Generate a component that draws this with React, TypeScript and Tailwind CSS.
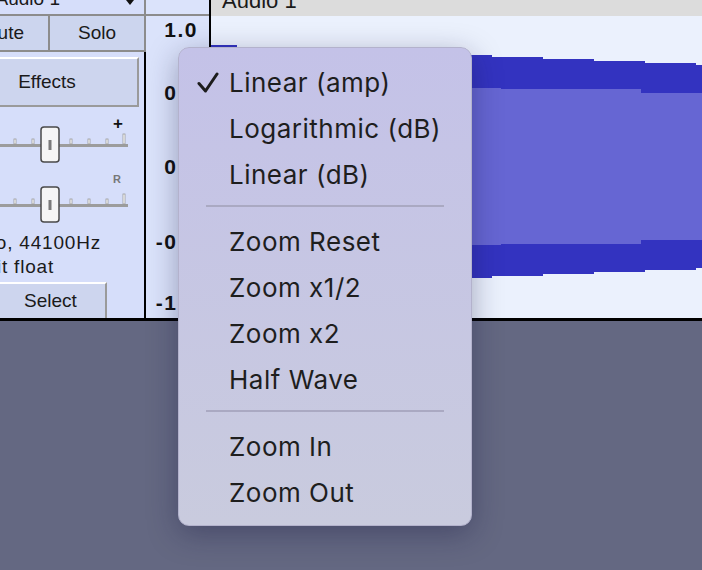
import React from 'react';

const menuGroups = [
  ['Linear (amp)', 'Logarithmic (dB)', 'Linear (dB)'],
  ['Zoom Reset', 'Zoom x1/2', 'Zoom x2', 'Half Wave'],
  ['Zoom In', 'Zoom Out'],
];

const rulerLabels = [
  { text: '1.0', top: 18 },
  { text: '0.5', top: 81 },
  { text: '0.0', top: 155 },
  { text: '-0.5', top: 230 },
  { text: '-1.0', top: 291 },
];

// waveform built as steps, x in local coords of the wave area (starts at page x 211)
const buildWave = () => {
  const center = 150.5;
  const outer: [number, number][] = [];
  for (let i = 0; i <= 10; i++) {
    const x0 = i === 0 ? 0 : 26 + (i - 1) * 51;
    const x1 = i === 10 ? 491 : 26 + i * 51;
    const top = 29 + i * 2;
    outer.push([x0, top], [x1, top]);
  }
  const innerSteps: [number, number, number][] = [
    [0, 120, 66],
    [120, 210, 69],
    [210, 290, 72],
    [290, 430, 73],
    [430, 491, 77],
  ];
  const inner: [number, number][] = [];
  innerSteps.forEach(([a, b, t]) => inner.push([a, t], [b, t]));
  const toPoly = (pts: [number, number][]) => {
    const top = pts.map(([x, y]) => `${x},${y}`);
    const bottom = [...pts].reverse().map(([x, y]) => `${x},${2 * center - y}`);
    return [...top, ...bottom].join(' ');
  };
  return { outer: toPoly(outer), inner: toPoly(inner) };
};

const Slider = ({ label, height, lineY }: { label: string; height: number; lineY: number }) => {
  const ticks = [14, 32, 70, 88, 106];
  return (
    <svg width="146" height={height} className="block">
      <text
        x="113"
        y={label === '+' ? 22 : 18}
        fontFamily="Liberation Sans, Arial, sans-serif"
        fontSize={label === '+' ? 17 : 11}
        fontWeight="bold"
        fill={label === '+' ? '#111' : '#777'}
      >
        {label}
      </text>
      <rect x="0" y={lineY - 2} width="128" height="3" fill="#9c9c9c" />
      {ticks.map(t => (
        <rect key={t} x={t} y={lineY - 7} width="2" height="5" fill="#ffffff" stroke="#999999" strokeWidth="0.8" />
      ))}
      <rect x="123" y={lineY - 12} width="2" height="10" fill="#ffffff" stroke="#999999" strokeWidth="0.8" />
      <rect x="41" y={lineY - 19} width="18" height="35" rx="3" fill="#f5f5f5" stroke="#4a4a4a" strokeWidth="1.5" />
      <rect x="48.5" y={lineY - 6} width="3" height="10" fill="#7a7a7a" />
    </svg>
  );
};

const CheckMark = () => (
  <svg width="22" height="22" viewBox="0 0 22 22" className="block">
    <path d="M2 11.5 L8.5 19 L20 2" fill="none" stroke="#1c1c1c" strokeWidth="3" strokeLinecap="round" strokeLinejoin="round" />
  </svg>
);

const App = () => {
  const wave = buildWave();

  return (
    <div className="relative w-[702px] h-[570px] overflow-hidden bg-[#646882] font-['Liberation_Sans',Arial,sans-serif]">
      {/* track */}
      <div className="flex h-[321px] border-b-[3px] border-black">
        {/* control panel */}
        <div className="w-[146px] flex flex-col overflow-hidden bg-[#d6defa] text-[19px] text-[#1a1a1a]">
          <div className="h-[16px] shrink-0 flex border-b-2 border-r-2 border-[#8c8c8c] overflow-hidden">
            <div className="w-[60px] flex justify-end whitespace-nowrap leading-[20px] -mt-[11px]">Audio 1</div>
            <svg width="8" height="6" className="ml-[66px]">
              <path d="M0 0 L8 0 L4 5 Z" fill="#111" />
            </svg>
          </div>
          <div className="h-[36px] shrink-0 flex border-b-2 border-r-2 border-[#8c8c8c]">
            <div className="w-[50px] flex items-center justify-end pr-[24px] border-r-2 border-[#8c8c8c] bg-[#ccd5ee] whitespace-nowrap">
              Mute
            </div>
            <div className="flex-1 flex items-center justify-center bg-[#ccd5ee]">Solo</div>
          </div>
          <div className="flex-1 flex flex-col border-r-2 border-black">
            <div className="mt-[5px] -ml-[43px] w-[182px] h-[50px] shrink-0 flex items-center justify-center bg-[#cdd5ee] border-t-2 border-t-white border-r-2 border-b-2 border-[#9a9a9a]">
              Effects
            </div>
            <Slider label="+" height={58} lineY={39} />
            <Slider label="R" height={60} lineY={41} />
            <div className="mt-[6px] leading-[24px] tracking-[0.8px]">
              <div className="w-[101px] flex justify-end whitespace-nowrap">Stereo, 44100Hz</div>
              <div className="w-[54px] flex justify-end whitespace-nowrap">32-bit float</div>
            </div>
            <div className="mt-[3px] -ml-[4px] w-[111px] h-[36px] shrink-0 flex items-center justify-center bg-[#cdd5ee] border-t-2 border-t-white border-r-2 border-[#9a9a9a]">
              Select
            </div>
          </div>
        </div>

        {/* vertical ruler */}
        <div className="w-[65px] flex flex-col bg-[#dbe3fb] border-r-2 border-black">
          <div className="h-[16px] shrink-0 border-b-2 border-[#8c8c8c]" />
          <div className="relative flex-1">
            {rulerLabels.map(l => (
              <div
                key={l.text}
                className="absolute right-[11px] font-bold text-[21px] leading-[24px] tracking-[1.5px] text-[#111] whitespace-nowrap"
                style={{ top: l.top - 16 }}
              >
                {l.text}
              </div>
            ))}
          </div>
        </div>

        {/* waveform */}
        <div className="flex-1 flex flex-col bg-[#ebf1fd]">
          <div className="h-[16px] shrink-0 bg-[#dcdcdc] overflow-hidden">
            <div className="pl-[11px] -mt-[10px] text-[22px] leading-[22px] text-[#1a1a1a] whitespace-nowrap">Audio 1</div>
          </div>
          <svg width="491" height="302" className="block">
            <polygon points={wave.outer} fill="#3333c0" />
            <polygon points={wave.inner} fill="#6666d3" />
          </svg>
        </div>
      </div>

      {/* context menu */}
      <div className="absolute left-[178px] top-[47px] w-[294px] h-[479px] rounded-[11px] border border-[#b3b2cc] bg-gradient-to-b from-[#c4c2e8] to-[#c9cbde] shadow-[0_8px_30px_rgba(20,20,60,0.35)] pt-[12px] font-['Inter',sans-serif] text-[26px] tracking-[0.5px] text-[#1e1e1e]">
        {menuGroups.map((group, gi) => (
          <div key={gi}>
            {gi > 0 && (
              <div className="h-[21px] pt-[7px] px-[27px]">
                <div className="w-full h-[2px] bg-[#aaa9c2]" />
              </div>
            )}
            {group.map(item => (
              <div key={item} className="h-[46px] flex items-center">
                <div className="w-[50px] flex justify-end pr-[10px]">
                  {item === 'Linear (amp)' && <CheckMark />}
                </div>
                <span className="leading-none">{item}</span>
              </div>
            ))}
          </div>
        ))}
      </div>
    </div>
  );
};

export default App;
